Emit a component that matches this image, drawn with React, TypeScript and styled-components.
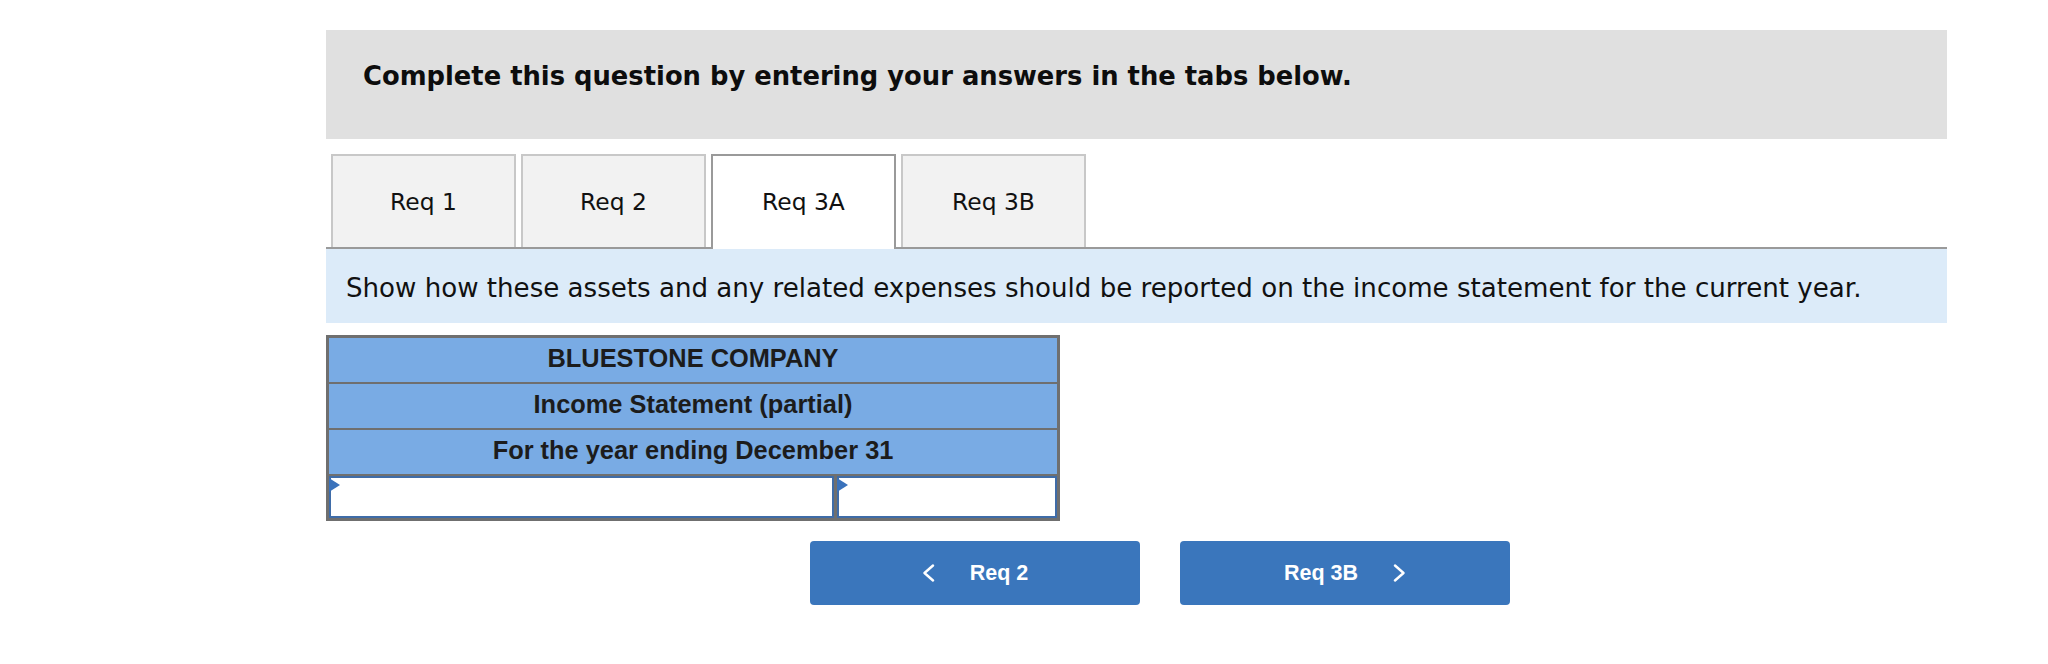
import React from "react";
import styled, { createGlobalStyle } from "styled-components";

const GlobalStyle = createGlobalStyle`
  html, body {
    margin: 0;
    padding: 0;
    background: #ffffff;
  }
  body {
    font-family: "DejaVu Sans", Verdana, sans-serif;
    color: #111111;
  }
`;

const Page = styled.div`
  width: 1621px;
  margin: 30px 0 0 326px;
  display: flex;
  flex-direction: column;
`;

const Banner = styled.div`
  height: 109px;
  box-sizing: border-box;
  background: #e0e0e0;
  padding: 31px 0 0 37px;
  font-family: "DejaVu Sans", Verdana, sans-serif;
  font-weight: bold;
  font-size: 25.8px;
  color: #0d0d0d;
`;

const TabBar = styled.div`
  margin-top: 15px;
  display: flex;
  align-items: flex-end;
  gap: 5px;
  padding-left: 5px;
  border-bottom: 2px solid #9a9a9a;
`;

const Tab = styled.div<{ $active?: boolean }>`
  width: 185px;
  height: ${(p) => (p.$active ? "95px" : "93px")};
  margin-bottom: ${(p) => (p.$active ? "-2px" : "0")};
  box-sizing: border-box;
  border: 2px solid ${(p) => (p.$active ? "#9a9a9a" : "#c8c8c8")};
  border-bottom: none;
  background: ${(p) => (p.$active ? "#ffffff" : "#f2f2f2")};
  display: flex;
  align-items: center;
  justify-content: center;
  font-family: "DejaVu Sans", Verdana, sans-serif;
  font-size: 23.4px;
  color: #111111;
  padding-bottom: ${(p) => (p.$active ? "2px" : "0")};
`;

const Instruction = styled.div`
  height: 74px;
  box-sizing: border-box;
  background: #dcebf9;
  display: flex;
  align-items: center;
  padding: 3px 0 0 20px;
  font-family: "DejaVu Sans", Verdana, sans-serif;
  font-size: 26.1px;
  color: #111111;
`;

const Statement = styled.div`
  margin-top: 12px;
  width: 734px;
  box-sizing: border-box;
  border: 3px solid #6f6f6f;
  display: flex;
  flex-direction: column;
  background: #6f6f6f;
`;

const HeadRow = styled.div`
  height: 44px;
  box-sizing: border-box;
  margin-bottom: 2px;
  padding-bottom: 4px;
  background: #79abe4;
  display: flex;
  align-items: center;
  justify-content: center;
  font-family: "Liberation Sans", Arial, sans-serif;
  font-weight: bold;
  font-size: 25.4px;
  color: #1c1c1c;
`;

const InputRow = styled.div`
  height: 42px;
  display: flex;
  gap: 3px;
  background: #6f6f6f;
`;

const Cell = styled.div<{ $w: number }>`
  position: relative;
  width: ${(p) => p.$w}px;
  box-sizing: border-box;
  background: #ffffff;
  border: 2px solid #3f6ca8;
  &::before {
    content: "";
    position: absolute;
    left: -2px;
    top: 0px;
    width: 0;
    height: 0;
    border-top: 7px solid transparent;
    border-bottom: 7px solid transparent;
    border-left: 11px solid #3a72bb;
  }
`;

const NavRow = styled.div`
  margin-top: 20px;
  display: flex;
  gap: 40px;
  padding-left: 484px;
`;

const NavButton = styled.button`
  width: 330px;
  height: 64px;
  border: none;
  border-radius: 4px;
  background: #3a76bc;
  color: #ffffff;
  display: flex;
  align-items: center;
  justify-content: center;
  gap: 35px;
  font-family: "Liberation Sans", Arial, sans-serif;
  font-weight: bold;
  font-size: 21.5px;
  padding: 0;
  cursor: pointer;
`;

const Chevron = ({ dir }: { dir: "left" | "right" }) => (
  <svg width="13" height="18" viewBox="0 0 13 18" aria-hidden="true">
    <polyline
      points={dir === "left" ? "11,1.5 2.5,9 11,16.5" : "2,1.5 10.5,9 2,16.5"}
      fill="none"
      stroke="#ffffff"
      strokeWidth="2.4"
      strokeLinecap="round"
      strokeLinejoin="round"
    />
  </svg>
);

export default function App() {
  return (
    <>
      <GlobalStyle />
      <Page>
        <Banner>Complete this question by entering your answers in the tabs below.</Banner>
        <TabBar>
          <Tab>Req 1</Tab>
          <Tab>Req 2</Tab>
          <Tab $active>Req 3A</Tab>
          <Tab>Req 3B</Tab>
        </TabBar>
        <Instruction>
          Show how these assets and any related expenses should be reported on the income statement for the current year.
        </Instruction>
        <Statement>
          <HeadRow>BLUESTONE COMPANY</HeadRow>
          <HeadRow>Income Statement (partial)</HeadRow>
          <HeadRow>For the year ending December 31</HeadRow>
          <InputRow>
            <Cell $w={505} />
            <Cell $w={220} />
          </InputRow>
        </Statement>
        <NavRow>
          <NavButton>
            <Chevron dir="left" />
            <span>Req 2</span>
          </NavButton>
          <NavButton>
            <span>Req 3B</span>
            <Chevron dir="right" />
          </NavButton>
        </NavRow>
      </Page>
    </>
  );
}
